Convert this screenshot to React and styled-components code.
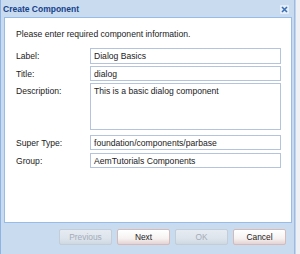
import React from "react";
import styled, { createGlobalStyle } from "styled-components";

const GlobalStyle = createGlobalStyle`
  html, body {
    margin: 0;
    padding: 0;
    background: #e9edf2;
  }
  body {
    font-family: "Liberation Sans", Arial, sans-serif;
  }
`;

const Screen = styled.div`
  display: flex;
  width: 300px;
  height: 254px;
  overflow: hidden;
`;

const Window = styled.div`
  display: flex;
  flex-direction: column;
  width: 295px;
  height: 254px;
  background: #c9dbee;
  border-left: 1px solid #8db2e3;
  border-right: 1px solid #99bbe8;
  box-sizing: border-box;
`;

const Backdrop = styled.div`
  flex: 1;
  background: #eef0f3;
  border-left: 1px solid #c7d3e0;
`;

const Header = styled.div`
  display: flex;
  align-items: center;
  justify-content: space-between;
  height: 17px;
  padding: 0 5px 0 2px;
`;

const Title = styled.div`
  font-size: 8.5px;
  font-weight: bold;
  color: #15428b;
`;

const CloseButton = styled.div`
  display: flex;
  align-items: center;
  justify-content: center;
  width: 9px;
  height: 9px;
  margin-top: 1px;
  background: #e4eefa;
  border-radius: 1px;
`;

const Panel = styled.div`
  display: flex;
  flex-direction: column;
  height: 206px;
  margin: 0 2px 0 3px;
  padding: 11px 10px 0 11px;
  background: #fff;
  border: 1px solid #99bbe8;
  box-sizing: border-box;
`;

const Intro = styled.div`
  font-size: 8.6px;
  color: #222;
  margin-bottom: 9px;
`;

const Row = styled.div`
  display: flex;
  align-items: flex-start;
  margin-bottom: ${(p) => p.$gap}px;
`;

const FieldLabel = styled.div`
  width: 74px;
  flex-shrink: 0;
  font-size: 8.6px;
  color: #222;
  padding-top: 3px;
`;

const Input = styled.div`
  width: 192px;
  height: ${(p) => p.$h}px;
  box-sizing: border-box;
  border: 1px solid #b5c4dc;
  background: #fff;
  font-size: 8.6px;
  color: #222;
  padding: 2px 3px 0;
`;

const Footer = styled.div`
  display: flex;
  justify-content: flex-end;
  gap: 5px;
  padding: 6px 8px 0 0;
`;

const Button = styled.div`
  display: flex;
  align-items: center;
  justify-content: center;
  width: 53px;
  height: 16px;
  box-sizing: border-box;
  border-radius: 2px;
  font-size: 8.4px;
  border: 1px solid ${(p) => (p.$disabled ? "#c3ccd7" : "#d6b9b9")};
  color: ${(p) => (p.$disabled ? "#a4acb8" : "#222")};
  background: ${(p) =>
    p.$disabled
      ? "linear-gradient(#e6ebf1, #dde4ec 60%, #cfd7e1)"
      : "linear-gradient(#ffffff, #f6f2f2 60%, #e4d2d3)"};
`;

const fields = [
  { label: "Label:", value: "Dialog Basics", h: 16, gap: 2 },
  { label: "Title:", value: "dialog", h: 15, gap: 2 },
  { label: "Description:", value: "This is a basic dialog component", h: 47, gap: 5 },
  { label: "Super Type:", value: "foundation/components/parbase", h: 15, gap: 3 },
  { label: "Group:", value: "AemTutorials Components", h: 15, gap: 0 },
];

const App = () => (
  <>
    <GlobalStyle />
    <Screen>
      <Window>
        <Header>
          <Title>Create Component</Title>
          <CloseButton>
            <svg width="7" height="7" viewBox="0 0 7 7">
              <path d="M1 1L6 6M6 1L1 6" stroke="#3a6fb4" strokeWidth="1.6" />
            </svg>
          </CloseButton>
        </Header>
        <Panel>
          <Intro>Please enter required component information.</Intro>
          {fields.map((f) => (
            <Row key={f.label} $gap={f.gap}>
              <FieldLabel>{f.label}</FieldLabel>
              <Input $h={f.h}>{f.value}</Input>
            </Row>
          ))}
        </Panel>
        <Footer>
          <Button $disabled>Previous</Button>
          <Button>Next</Button>
          <Button $disabled>OK</Button>
          <Button>Cancel</Button>
        </Footer>
      </Window>
      <Backdrop />
    </Screen>
  </>
);

export default App;
